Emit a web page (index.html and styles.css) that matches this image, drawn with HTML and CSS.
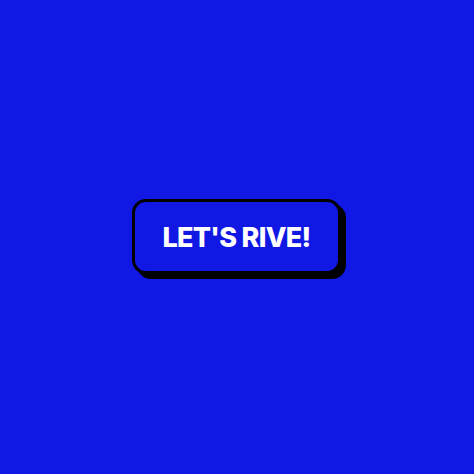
FILE: index.html
```html
<!DOCTYPE html>
<html>
<head>
<meta charset="utf-8">
<link rel="stylesheet" href="styles.css">
</head>
<body>
<div class="stage">
  <button class="cta">LET'S RIVE!</button>
</div>
</body>
</html>
```
FILE: styles.css
```css
html, body {
  margin: 0;
  padding: 0;
  width: 474px;
  height: 474px;
  background: #1218e4;
}
.stage {
  width: 474px;
  height: 474px;
  display: flex;
  align-items: center;
  justify-content: center;
}
.cta {
  box-sizing: border-box;
  width: 209px;
  height: 75px;
  margin: -2px 0 0 -1px;
  background: #1218e4;
  border: 3px solid #000;
  border-radius: 14px;
  box-shadow: 5px 5px 0 #000;
  color: #fff;
  font-family: Inter, "Noto Sans", sans-serif;
  font-weight: 800;
  font-size: 27px;
  letter-spacing: -0.7px;
  padding: 3px 0 0 0;
  display: flex;
  align-items: center;
  justify-content: center;
}
```
